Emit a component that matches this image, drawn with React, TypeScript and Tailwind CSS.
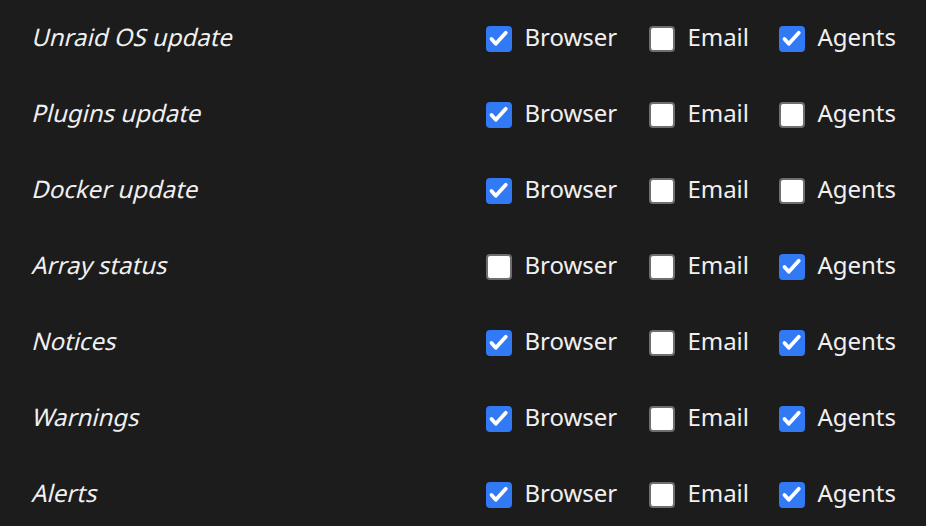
import React from "react";

type Row = { label: string; browser: boolean; email: boolean; agents: boolean };

const rows: Row[] = [
  { label: "Unraid OS update", browser: true, email: false, agents: true },
  { label: "Plugins update", browser: true, email: false, agents: false },
  { label: "Docker update", browser: true, email: false, agents: false },
  { label: "Array status", browser: false, email: false, agents: true },
  { label: "Notices", browser: true, email: false, agents: true },
  { label: "Warnings", browser: true, email: false, agents: true },
  { label: "Alerts", browser: true, email: false, agents: true },
];

function Box({ checked }: { checked: boolean }) {
  if (checked) {
    return (
      <span className="flex h-[26px] w-[26px] items-center justify-center rounded-[4px] bg-[#3179f5]">
        <svg width="26" height="26" viewBox="0 0 26 26" fill="none">
          <path d="M5.5 13 L9.8 17.8 L19.8 6.8" stroke="#fff" strokeWidth="3.8" strokeLinecap="round" strokeLinejoin="round" />
        </svg>
      </span>
    );
  }
  return <span className="block h-[26px] w-[26px] rounded-[4px] border-2 border-[#6e6e6e] bg-white" />;
}

function Option({ checked, label }: { checked: boolean; label: string }) {
  return (
    <label className="flex items-center gap-[12px]">
      <Box checked={checked} />
      <span className="leading-[26px] -translate-y-[2px]">{label}</span>
    </label>
  );
}

export default function App() {
  return (
    <div
      className="min-h-[526px] w-full bg-[#1c1c1c] text-[24px] text-[#f0f0f0]"
      style={{ fontFamily: '"Noto Sans", sans-serif' }}
    >
      {rows.map((r) => (
        <div key={r.label} className="flex h-[76px] items-center justify-between pl-[30px] pr-[30px] pt-[2px]">
          <span className="inline-block leading-[26px] -translate-y-[2px] -skew-x-[14deg] origin-bottom-left">{r.label}</span>
          <div className="flex items-center">
            <div className="w-[163px]">
              <Option checked={r.browser} label="Browser" />
            </div>
            <div className="w-[130px]">
              <Option checked={r.email} label="Email" />
            </div>
            <Option checked={r.agents} label="Agents" />
          </div>
        </div>
      ))}
    </div>
  );
}
